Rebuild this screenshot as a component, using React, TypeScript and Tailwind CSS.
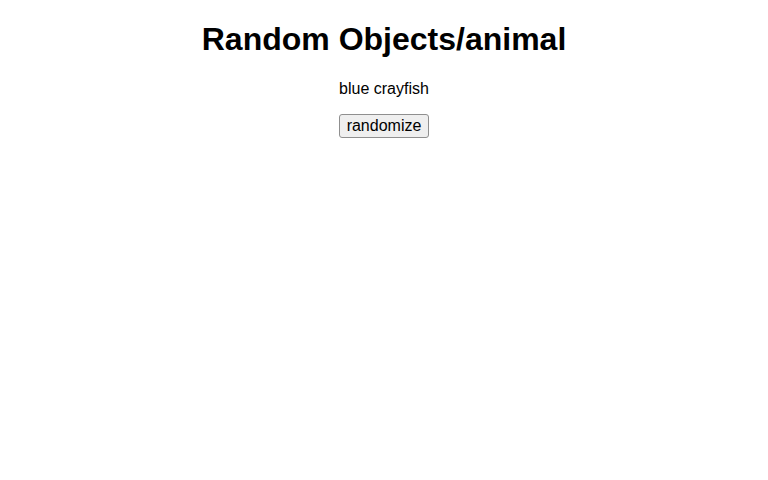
import { useState } from "react";

const animals = ["blue crayfish", "red fox", "green iguana", "snow leopard", "barn owl"];

export default function App() {
  const [idx, setIdx] = useState(0);
  return (
    <div className="min-h-screen bg-white text-black text-center font-['Liberation_Sans',Arial,sans-serif]">
      <h1 className="text-[32px] leading-[37px] font-bold pt-[21px] pb-[22px]">Random Objects/animal</h1>
      <p className="text-[16px] leading-[18px]">{animals[idx]}</p>
      <div className="mt-4">
        <button
          onClick={() => setIdx((idx + 1) % animals.length)}
          className="text-[16px] leading-[18px] px-[7px] py-[2px] border border-[#8f8f8f] rounded-[3px] bg-[#efefef] hover:bg-[#e5e5e5]"
        >
          randomize
        </button>
      </div>
    </div>
  );
}
